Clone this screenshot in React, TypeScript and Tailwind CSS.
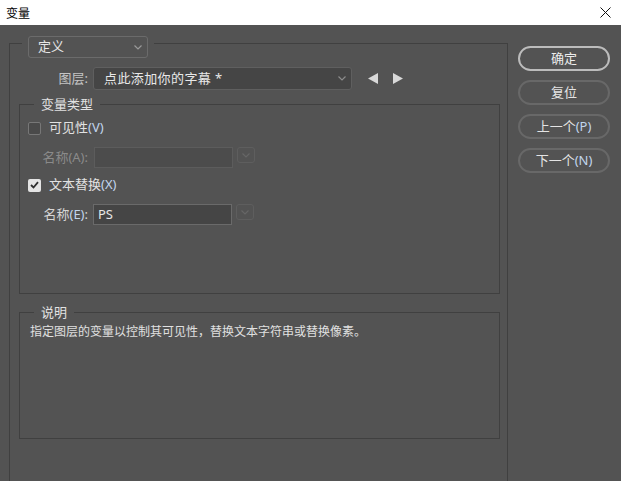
import type { ReactNode } from "react";

const font = { fontFamily: '"Noto Sans", "Noto Sans CJK SC", sans-serif' };

function Chevron({ color = "#9a9a9a" }: { color?: string }) {
  return (
    <svg width="8" height="5" viewBox="0 0 8 5" fill="none">
      <path d="M0.5 0.5 L4 4 L7.5 0.5" stroke={color} strokeWidth="1.2" />
    </svg>
  );
}

function Key({ children }: { children: ReactNode }) {
  return <span className="text-[#c2d6ee]">{children}</span>;
}

function SideButton({ label, primary }: { label: ReactNode; primary?: boolean }) {
  return (
    <button
      type="button"
      className={
        primary
          ? "flex h-[25px] w-[92px] items-center justify-center rounded-full border-2 border-[#bcbcbc] text-[13px] text-[#ececec]"
          : "flex h-[25px] w-[92px] items-center justify-center rounded-full border-2 border-[#686868] text-[13px] text-[#e4e4e4]"
      }
    >
      {label}
    </button>
  );
}

function NameRow({ label, value, disabled }: { label: ReactNode; value: string; disabled?: boolean }) {
  return (
    <div className="flex items-start">
      <span
        className={
          disabled
            ? "w-[68px] text-right text-[13px] leading-[21px] text-[#8a8a8a]"
            : "w-[68px] text-right text-[13px] leading-[21px] text-[#d6d6d6]"
        }
      >
        {label}
      </span>
      <div
        className={
          disabled
            ? "ml-[6px] h-[21px] w-[139px] border border-[#5c5c5c] bg-[#4c4c4c]"
            : "ml-[5px] h-[21px] w-[139px] border border-[#6a6a6a] bg-[#454545] pl-[4px] text-[13px] leading-[19px] text-[#e8e8e8]"
        }
      >
        {value}
      </div>
      <div className="ml-[4px] flex h-[16px] w-[18px] items-center justify-center rounded-[3px] border border-[#5e5e5e]">
        <Chevron color="#666666" />
      </div>
    </div>
  );
}

export default function App() {
  return (
    <div className="flex h-[481px] w-[621px] flex-col overflow-hidden bg-[#535353]" style={font}>
      <div className="flex h-[25px] flex-none items-center justify-between bg-white pl-[6px] pr-[10px]">
        <span className="text-[12px] text-black" style={{ fontFamily: '"Noto Sans CJK SC", sans-serif' }}>
          变量
        </span>
        <svg width="11" height="11" viewBox="0 0 11 11">
          <path d="M0.5 0.5 L10.5 10.5 M10.5 0.5 L0.5 10.5" stroke="#111" strokeWidth="1" />
        </svg>
      </div>

      <div className="flex flex-1 overflow-hidden">
        <fieldset className="ml-[9px] mt-[3px] h-[470px] w-[499px] flex-none border border-[#404040]">
          <legend className="ml-[12px] px-[6px] pt-[8px]">
            <div className="flex h-[22px] w-[120px] items-center justify-between rounded-[3px] border border-[#6b6b6b] pl-[9px] pr-[5px] text-[13px] text-[#e6e6e6]">
              <span>定义</span>
              <Chevron />
            </div>
          </legend>

          <div className="mt-[9px] flex h-[23px] items-center">
            <span className="w-[78px] text-right text-[13px] text-[#c4c4c4]">图层:</span>
            <div className="ml-[5px] flex h-[23px] w-[259px] items-center justify-between rounded-[3px] border border-[#5f5f5f] bg-[#454545] pl-[10px] pr-[5px] text-[13px] text-[#e8e8e8]">
              <span className="tracking-[0.4px]">点此添加你的字幕 *</span>
              <Chevron color="#8c8c8c" />
            </div>
            <svg className="ml-[16px]" width="10" height="11" viewBox="0 0 10 11">
              <path d="M0 5.5 L10 0 L10 11 Z" fill="#d9d9d9" />
            </svg>
            <svg className="ml-[15px]" width="10" height="11" viewBox="0 0 10 11">
              <path d="M10 5.5 L0 0 L0 11 Z" fill="#d9d9d9" />
            </svg>
          </div>

          <fieldset className="ml-[9px] mt-[5px] h-[199px] w-[481px] border border-[#404040]">
            <legend className="ml-[14px] px-[7px] text-[13px] leading-[18px] text-[#e2e2e2]">变量类型</legend>

            <div className="mt-[6px] flex h-[18px] items-center gap-[8px] pl-[8px]">
              <div className="h-[13px] w-[13px] rounded-[2px] border border-[#777777] bg-[#4a4a4a]" />
              <span className="text-[13px] text-[#e2e2e2]">
                可见性<Key>(V)</Key>
              </span>
            </div>

            <div className="mt-[10px]">
              <NameRow label="名称(A):" value="" disabled />
            </div>

            <div className="mt-[8px] flex h-[18px] items-center gap-[8px] pl-[8px]">
              <div className="flex h-[13px] w-[13px] items-center justify-center rounded-[2px] bg-[#e4e4e4]">
                <svg width="9" height="8" viewBox="0 0 9 8" fill="none">
                  <path d="M1 4 L3.5 6.5 L8 1.2" stroke="#2e2e2e" strokeWidth="1.8" />
                </svg>
              </div>
              <span className="text-[13px] text-[#e2e2e2]">
                文本替换<Key>(X)</Key>
              </span>
            </div>

            <div className="mt-[10px]">
              <NameRow
                label={
                  <>
                    名称<Key>(E)</Key>:
                  </>
                }
                value="PS"
              />
            </div>
          </fieldset>

          <fieldset className="ml-[9px] mt-[9px] h-[136px] w-[481px] border border-[#404040]">
            <legend className="ml-[14px] px-[7px] text-[13px] leading-[18px] text-[#e2e2e2]">说明</legend>
            <p className="mt-[2px] pl-[10px] text-[12px] leading-[18px] text-[#e0e0e0]">
              指定图层的变量以控制其可见性，替换文本字符串或替换像素。
            </p>
          </fieldset>
        </fieldset>

        <div className="ml-[10px] mt-[21px] flex flex-col gap-[9px]">
          <SideButton label="确定" primary />
          <SideButton label="复位" />
          <SideButton
            label={
              <>
                上一个<Key>(P)</Key>
              </>
            }
          />
          <SideButton
            label={
              <>
                下一个<Key>(N)</Key>
              </>
            }
          />
        </div>
      </div>
    </div>
  );
}
